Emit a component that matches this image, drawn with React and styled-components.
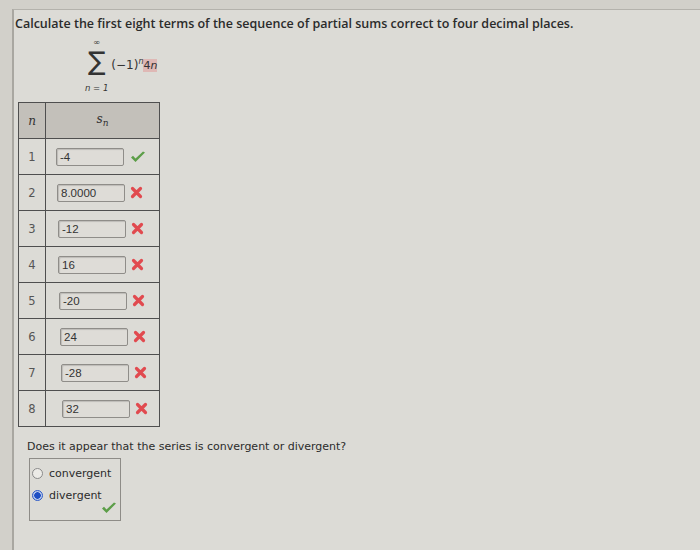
import React from 'react';
import styled, { createGlobalStyle } from 'styled-components';

const GlobalStyle = createGlobalStyle`
  html, body {
    margin: 0;
    padding: 0;
    background: #d2d0ca;
    overflow: hidden;
  }
`;

const Page = styled.div`
  width: 700px;
  height: 550px;
  padding: 9px 0 0 12px;
  box-sizing: border-box;
  background: #d2d0ca;
`;

const Panel = styled.div`
  height: 100%;
  box-sizing: border-box;
  border-top: 1px solid #b4b2ac;
  border-left: 2px solid #a9a7a1;
  background: #dcdbd6;
  padding: 6px 0 0 1px;
  font-family: "DejaVu Sans", Verdana, sans-serif;
  color: #2a2a2a;
`;

const Title = styled.div`
  font-family: "Open Sans", "DejaVu Sans", sans-serif;
  font-size: 12.5px;
  font-weight: 600;
  line-height: 16px;
  color: #2b2b2b;
`;

const Formula = styled.div`
  display: flex;
  align-items: flex-start;
  margin: 6px 0 0 70px;
  height: 58px;
  gap: 3px;
`;

const Sigma = styled.div`
  display: flex;
  flex-direction: column;
  align-items: center;
  font-family: "DejaVu Sans", sans-serif;
  color: #333;
`;

const Limit = styled.span`
  display: block;
  font-size: 8.5px;
  line-height: 9px;
  font-style: ${p => (p.italic ? 'italic' : 'normal')};
`;

const SigmaSign = styled.span`
  display: block;
  font-size: 26px;
  line-height: 24px;
  height: 24px;
  margin: 2px 0 11px;
`;

const Term = styled.span`
  font-size: 12px;
  line-height: 14px;
  color: #333;
  margin-top: 17px;
`;

const Sup = styled.sup`
  font-style: italic;
  font-size: 8px;
`;

const Highlight = styled.span`
  color: #333;
  background: rgba(230, 120, 120, 0.35);
  font-size: 11px;
`;

const Table = styled.table`
  border-collapse: collapse;
  margin: 6px 0 0 3px;
`;

const HeadCell = styled.th`
  background: #c3c0ba;
  border: 1px solid #4f4f4f;
  height: 35px;
  width: ${p => p.w}px;
  font-family: "DejaVu Serif", serif;
  font-style: italic;
  font-weight: normal;
  font-size: 12px;
  color: #333;
  padding: 0;
`;

const SubN = styled.sub`
  font-size: 9px;
`;

const NumCell = styled.td`
  border: 1px solid #4f4f4f;
  height: 35px;
  text-align: center;
  font-size: 11.5px;
  color: #555;
  padding: 0;
`;

const ValueCell = styled.td`
  border: 1px solid #4f4f4f;
  height: 35px;
  padding: 0 0 0 10px;
`;

const Entry = styled.div`
  display: flex;
  align-items: center;
  gap: 5px;
  margin-left: ${p => p.shift}px;
`;

const Input = styled.div`
  width: 68px;
  height: 18px;
  box-sizing: border-box;
  border: 1px solid #8f8d89;
  border-radius: 2px;
  background: #dedcd7;
  box-shadow: inset 1px 1px 1px rgba(0, 0, 0, 0.15);
  font-family: "Liberation Sans", Arial, sans-serif;
  font-size: 11.5px;
  line-height: 16px;
  padding-left: 3px;
  color: #333;
`;

const Question = styled.div`
  margin: 13px 0 0 12px;
  font-size: 11px;
  color: #2b2b2b;
`;

const Choices = styled.div`
  margin: 5px 0 0 14px;
  width: 92px;
  height: 63px;
  box-sizing: border-box;
  border: 1px solid #8e8c87;
  padding: 7px 0 0 2px;
  position: relative;
`;

const Choice = styled.label`
  display: flex;
  align-items: center;
  gap: 6px;
  font-size: 11px;
  color: #2b2b2b;
  height: 14px;
  margin-bottom: 8px;
`;

const Radio = styled.span`
  width: 11px;
  height: 11px;
  border-radius: 50%;
  box-sizing: border-box;
  border: 1px solid ${p => (p.on ? '#2c5ac8' : '#8a8a8a')};
  background: ${p =>
    p.on ? 'radial-gradient(circle, #1f4fc4 0 3px, #b9c9ea 3.5px)' : '#ecebe7'};
`;

const CornerMark = styled.span`
  position: absolute;
  right: 2px;
  bottom: 1px;
`;

const Check = () => (
  <svg width="18" height="14" viewBox="0 0 18 14">
    <path d="M2 7.5 L6.5 12 L16 2.5 L14 1.5 L6.5 8.5 L4 5.8 Z" fill="#5c9e48" />
  </svg>
);

const Cross = () => (
  <svg width="13" height="13" viewBox="0 0 13 13">
    <path d="M2.5 2.5 L10.5 10.5 M10.5 2.5 L2.5 10.5" stroke="#e14a4f" strokeWidth="3.2" strokeLinecap="round" />
  </svg>
);

const rows = [
  { n: 1, v: '-4', ok: true },
  { n: 2, v: '8.0000' },
  { n: 3, v: '-12' },
  { n: 4, v: '16' },
  { n: 5, v: '-20' },
  { n: 6, v: '24' },
  { n: 7, v: '-28' },
  { n: 8, v: '32' },
];

export default function App() {
  return (
    <>
      <GlobalStyle />
      <Page>
        <Panel>
          <Title>Calculate the first eight terms of the sequence of partial sums correct to four decimal places.</Title>
          <Formula>
            <Sigma>
              <Limit>∞</Limit>
              <SigmaSign>∑</SigmaSign>
              <Limit italic>n = 1</Limit>
            </Sigma>
            <Term>
              (−1)<Sup>n</Sup>
              <Highlight>4<i>n</i></Highlight>
            </Term>
          </Formula>
          <Table>
            <thead>
              <tr>
                <HeadCell w={26}>n</HeadCell>
                <HeadCell w={113}>
                  s<SubN>n</SubN>
                </HeadCell>
              </tr>
            </thead>
            <tbody>
              {rows.map((r, i) => (
                <tr key={r.n}>
                  <NumCell>{r.n}</NumCell>
                  <ValueCell>
                    <Entry shift={Math.round(i * 0.8)}>
                      <Input>{r.v}</Input>
                      {r.ok ? <Check /> : <Cross />}
                    </Entry>
                  </ValueCell>
                </tr>
              ))}
            </tbody>
          </Table>
          <Question>Does it appear that the series is convergent or divergent?</Question>
          <Choices>
            <Choice>
              <Radio />
              convergent
            </Choice>
            <Choice>
              <Radio on />
              divergent
            </Choice>
            <CornerMark>
              <Check />
            </CornerMark>
          </Choices>
        </Panel>
      </Page>
    </>
  );
}
